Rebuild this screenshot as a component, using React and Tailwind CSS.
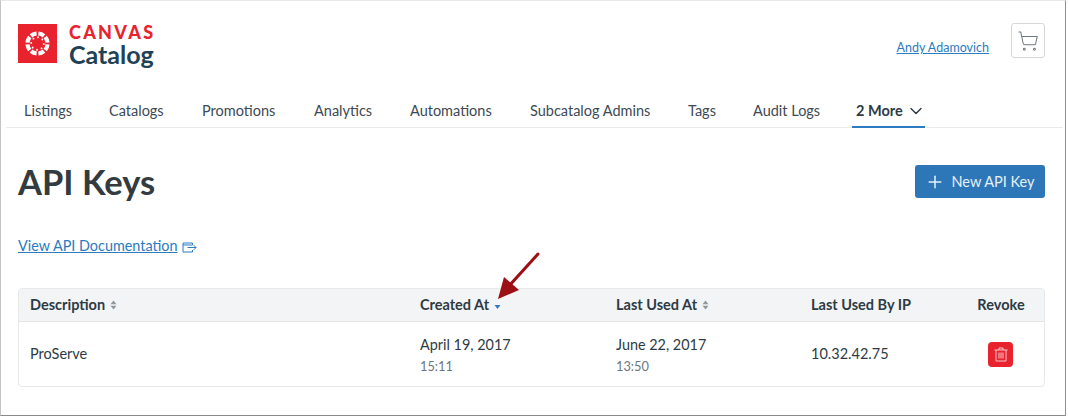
import React from "react";
import { ChevronDown, Plus, ShoppingCart } from "lucide-react";

const tabs = [
  ["Listings", "w-[85px]"],
  ["Catalogs", "w-[93px]"],
  ["Promotions", "w-[112px]"],
  ["Analytics", "w-[96px]"],
  ["Automations", "w-[120px]"],
  ["Subcatalog Admins", "w-[158px]"],
  ["Tags", "w-[65px]"],
  ["Audit Logs", "w-[103px]"],
];

const CanvasLogo = () => {
  const big = [0, 45, 90, 135, 180, 225, 270, 315];
  return (
    <div className="w-[39px] h-[39px] bg-[#e8232e] flex items-center justify-center">
      <svg width="25" height="25" viewBox="-12.5 -12.5 25 25" fill="#fff">
        {big.map((a) => (
          <g key={a} transform={`rotate(${a + 22.5})`}>
            <path d="M-3.6 -11.6 A12 12 0 0 1 3.6 -11.6 L2.4 -7.6 A8 8 0 0 0 -2.4 -7.6 Z" />
            <circle cx="2.9" cy="-5.6" r="0.95" />
          </g>
        ))}
      </svg>
    </div>
  );
};

const SortArrows = ({ active }) => (
  <svg width="7" height="10" viewBox="0 0 7 10" className="ml-[5px]">
    {active ? (
      <path d="M0.5 5 H6.5 L3.5 9 Z" fill="#2d7bc0" />
    ) : (
      <>
        <path d="M0.5 4.2 L3.5 0.6 L6.5 4.2 Z" fill="#8f989e" />
        <path d="M0.5 5.8 H6.5 L3.5 9.4 Z" fill="#8f989e" />
      </>
    )}
  </svg>
);

const DocIcon = () => (
  <svg width="15" height="11" viewBox="0 0 15 11" fill="none" stroke="#2d7bc0" strokeWidth="1" className="ml-[4px] mt-[3px]">
    <path d="M10.5 3 V1 H1 V10 H10.5 V8" />
    <path d="M1 3 H10.5" />
    <path d="M5.5 5.5 H14 M11.8 3.2 L14 5.5 L11.8 7.8" />
  </svg>
);

const TrashIcon = () => (
  <svg width="14" height="15" viewBox="0 0 14 15" fill="none" stroke="#f9c9cc" strokeWidth="1">
    <path d="M0.5 3 H13.5 M5 3 V1 H9 V3" />
    <path d="M2 3 V14 H12 V3" />
    <path d="M5 5.5 V11.5 M7 5.5 V11.5 M9 5.5 V11.5" />
  </svg>
);

const HeaderCell = ({ className, children, sort, active }) => (
  <div className={`flex items-center ${className}`}>
    <span>{children}</span>
    {sort && <SortArrows active={active} />}
  </div>
);

const DateCell = ({ className, date, time }) => (
  <div className={className}>
    <div className="text-[14.4px] leading-[20px] text-[#2d3b45]">{date}</div>
    <div className="text-[12.8px] leading-[16px] mt-[3px] text-[#6b7780]">{time}</div>
  </div>
);

export default function App() {
  return (
    <div
      className="w-[1068px] h-[418px] bg-white overflow-hidden"
      style={{ fontFamily: "Lato, 'Noto Sans', sans-serif" }}
    >
      <div className="relative w-[1066px] h-[416px] bg-white border-l border-l-[#c4c4c4] border-t border-t-[#e8e8e8] border-r border-r-[#8f8f8f] border-b border-b-[#8a8a8a]">
        <div className="flex items-start pl-[17px] pr-[20px] pt-[23px] h-[77px]">
          <CanvasLogo />
          <div className="ml-[12px] -mt-[1px]">
            <div className="text-[18px] leading-[18px] font-black tracking-[2.3px] text-[#e8232e]">CANVAS</div>
            <div className="text-[25px] leading-[27px] font-bold text-[#1f4256]">Catalog</div>
          </div>
          <a className="ml-auto mt-[16px] text-[12.5px] leading-[16px] text-[#2d7bc0] underline">Andy Adamovich</a>
          <div className="ml-[22px] -mt-[1px] w-[34px] h-[35px] border border-[#d5d8da] rounded-[3px] flex items-center justify-center">
            <ShoppingCart size={22} strokeWidth={1.1} color="#6f787e" />
          </div>
        </div>

        <div className="flex h-[50px] ml-[5px] pl-[18px] mr-[2px] border-b border-[#e8eaec] text-[14.5px] text-[#3d4a54] items-center">
          {tabs.map(([t, w]) => (
            <div key={t} className={`${w} shrink-0 pt-[17px]`}>{t}</div>
          ))}
          <div className="relative h-full flex items-center pt-[17px] font-bold text-[#2d3b45] text-[14.5px]">
            <span>2 More</span>
            <ChevronDown size={20} strokeWidth={1.7} className="ml-[3px]" />
            <div className="absolute -left-[4px] right-[1px] bottom-[-1px] h-[2px] bg-[#2d7bc0]" />
          </div>
        </div>

        <div className="px-[17px] pr-[20px]">
          <div className="flex items-start justify-between pt-[37px]">
            <h1 className="text-[34.5px] leading-[34px] font-bold text-[#333b40]">API Keys</h1>
            <button className="h-[33px] w-[130px] bg-[#2d77b8] rounded-[3px] text-[#e6f0f8] text-[14.5px] flex items-center justify-center">
              <Plus size={20} strokeWidth={1.8} className="mr-[6px]" />
              New API Key
            </button>
          </div>

          <div className="flex items-center mt-[37px] text-[14.4px] leading-[20px] text-[#2d7bc0]">
            <a className="underline">View API Documentation</a>
            <DocIcon />
          </div>

          <div className="mt-[32px] border border-[#e6e8ea] rounded-[4px] overflow-hidden">
            <div className="h-[33px] bg-[#f3f4f5] border-b border-[#e3e5e7] flex items-center text-[14.5px] font-bold text-[#2d3b45]">
              <HeaderCell className="w-[401px] pl-[11px]" sort>Description</HeaderCell>
              <HeaderCell className="w-[196px]" sort active>Created At</HeaderCell>
              <HeaderCell className="w-[195px]" sort>Last Used At</HeaderCell>
              <HeaderCell className="w-[166px]">Last Used By IP</HeaderCell>
              <HeaderCell className="w-[48px] justify-center">Revoke</HeaderCell>
            </div>
            <div className="h-[64px] flex items-center text-[14.5px] text-[#2d3b45]">
              <div className="w-[401px] pl-[11px]">ProServe</div>
              <DateCell className="w-[196px]" date="April 19, 2017" time="15:11" />
              <DateCell className="w-[195px]" date="June 22, 2017" time="13:50" />
              <div className="w-[177px]">10.32.42.75</div>
              <div className="w-[25px] h-[25px] bg-[#e8232e] rounded-[4px] flex items-center justify-center">
                <TrashIcon />
              </div>
            </div>
          </div>
        </div>

        {/* annotation arrow, sits over the table header */}
        <svg width="50" height="60" viewBox="0 0 50 60" className="absolute left-[494px] top-[249px]">
          <path d="M43 4 L14 36" stroke="#9c0f14" strokeWidth="3" strokeLinecap="round" />
          <path d="M3 49 L9 27 L24 40 Z" fill="#9c0f14" />
        </svg>
      </div>
    </div>
  );
}
